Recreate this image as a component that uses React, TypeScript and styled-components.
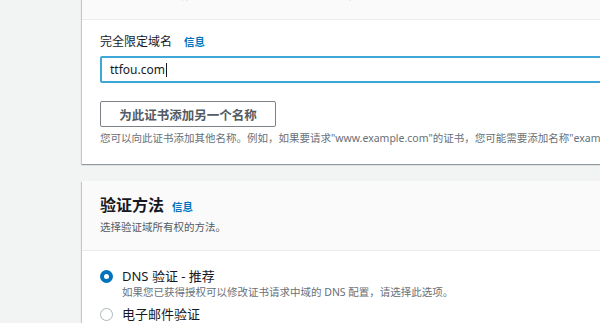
import React from "react";
import styled, { createGlobalStyle } from "styled-components";

const GlobalStyle = createGlobalStyle`
  html, body {
    margin: 0;
    padding: 0;
    background: #f2f3f3;
    font-family: "Noto Sans", "Noto Sans CJK SC", sans-serif;
    color: #16191f;
  }
`;

const Page = styled.div`
  width: 600px;
  height: 323px;
  overflow: hidden;
  padding-left: 82px;
  box-sizing: border-box;
`;

const Stack = styled.div`
  display: flex;
  flex-direction: column;
  gap: 17px;
  width: 760px;
`;

const Card = styled.section<{ $offset?: number }>`
  background: #fff;
  margin-top: ${(p) => p.$offset ?? 0}px;
  box-shadow: 0 1px 1px 0 rgba(0, 28, 36, 0.3),
    -1px 1px 1px 0 rgba(0, 28, 36, 0.15);
`;

const Header = styled.header<{ $pad: string }>`
  background: #fafafa;
  border-bottom: 1px solid #eaeded;
  padding: ${(p) => p.$pad};
`;

const HeaderNote = styled.div`
  font-size: 11px;
  line-height: 20px;
  color: #545b64;
`;

const Title = styled.h2`
  margin: 0;
  display: flex;
  align-items: baseline;
  gap: 8px;
  font-size: 16px;
  font-weight: 700;
  line-height: 22px;
  color: #16191f;
`;

const Info = styled.a`
  font-size: 10.5px;
  font-weight: 700;
  color: #0073bb;
  text-decoration: none;
`;

const Description = styled.p`
  margin: 1px 0 0;
  font-size: 10.5px;
  line-height: 16px;
  color: #545b64;
`;

const Body = styled.div<{ $pad: string }>`
  padding: ${(p) => p.$pad};
`;

const Label = styled.label`
  display: flex;
  align-items: baseline;
  gap: 12px;
  font-size: 12px;
  line-height: 20px;
  color: #16191f;
`;

const InputBox = styled.div`
  margin-top: 4px;
  height: 27px;
  box-sizing: border-box;
  border: 2px solid #3fa6d8;
  border-radius: 2px;
  padding: 0 8px;
  display: flex;
  align-items: center;
  font-size: 12px;
  color: #16191f;
`;

const Caret = styled.span`
  display: inline-block;
  width: 1px;
  height: 14px;
  background: #16191f;
  margin-left: 1px;
`;

const Button = styled.button`
  margin-top: 18px;
  width: 176px;
  height: 26px;
  background: #fff;
  border: 1px solid #7d8288;
  border-radius: 2px;
  font-family: inherit;
  font-size: 12.5px;
  font-weight: 700;
  color: #545b64;
  padding: 0;
`;

const Help = styled.div`
  margin-top: 3px;
  font-size: 10.5px;
  line-height: 16px;
  color: #687078;
  white-space: nowrap;
`;

const Option = styled.div`
  display: grid;
  grid-template-columns: 13px 1fr;
  column-gap: 9px;
  align-items: start;
`;

const Radio = styled.span<{ $checked?: boolean }>`
  width: 13px;
  height: 13px;
  box-sizing: border-box;
  border-radius: 50%;
  margin-top: 3px;
  border: ${(p) => (p.$checked ? "4px solid #0073bb" : "1px solid #aab7b8")};
  background: #fff;
`;

const OptionLabel = styled.div`
  font-size: 13px;
  line-height: 18px;
  color: #16191f;
`;

const OptionHint = styled.div`
  font-size: 10.5px;
  line-height: 15px;
  color: #687078;
`;

const Options = styled.div`
  display: flex;
  flex-direction: column;
  gap: 5px;
`;

export default function App() {
  return (
    <>
      <GlobalStyle />
      <Page>
        <Stack>
          <Card $offset={-30}>
            <Header $pad="15px 18px 14px">
              <HeaderNote>提供您要保护的站点的一个或多个域名。 了解更多 信息</HeaderNote>
            </Header>
            <Body $pad="12px 18px 18px">
              <Label>
                完全限定域名 <Info href="#">信息</Info>
              </Label>
              <InputBox>
                ttfou.com
                <Caret />
              </InputBox>
              <Button>为此证书添加另一个名称</Button>
              <Help>
                您可以向此证书添加其他名称。例如，如果要请求"www.example.com"的证书，您可能需要添加名称"example.com"，以便客户可以通过任一名称访问您的站点。
              </Help>
            </Body>
          </Card>
          <Card>
            <Header $pad="13px 18px 15px">
              <Title>
                验证方法 <Info href="#">信息</Info>
              </Title>
              <Description>选择验证域所有权的方法。</Description>
            </Header>
            <Body $pad="16px 18px">
              <Options>
                <Option>
                  <Radio $checked />
                  <div>
                    <OptionLabel>DNS 验证 - 推荐</OptionLabel>
                    <OptionHint>
                      如果您已获得授权可以修改证书请求中域的 DNS 配置，请选择此选项。
                    </OptionHint>
                  </div>
                </Option>
                <Option>
                  <Radio />
                  <div>
                    <OptionLabel>电子邮件验证</OptionLabel>
                  </div>
                </Option>
              </Options>
            </Body>
          </Card>
        </Stack>
      </Page>
    </>
  );
}
